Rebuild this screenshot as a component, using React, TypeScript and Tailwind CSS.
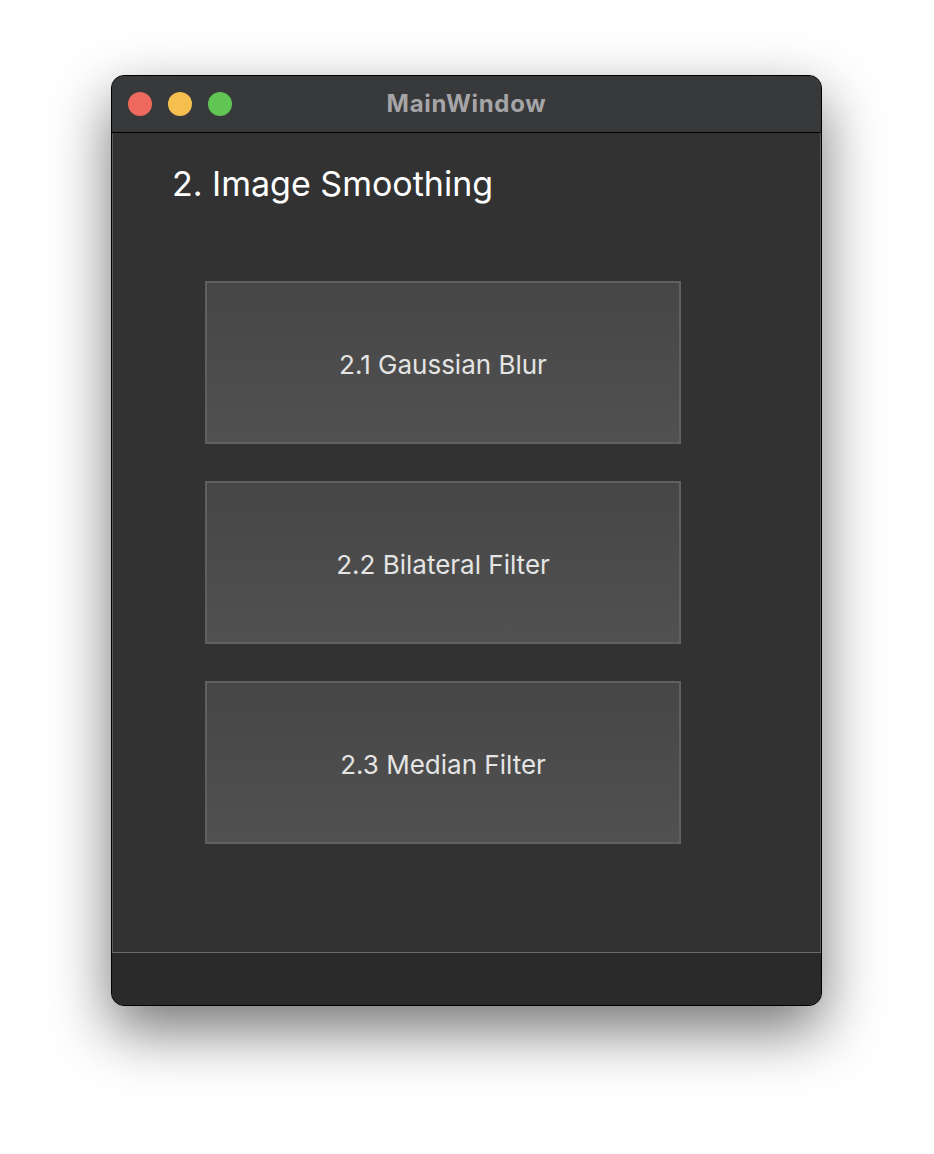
const items = ["2.1 Gaussian Blur", "2.2 Bilateral Filter", "2.3 Median Filter"];

const TrafficLights = () => (
    <div className="absolute left-[16px] top-[16px] flex gap-[16px]">
        <span className="h-[24px] w-[24px] rounded-full bg-[#ee6a5f]" />
        <span className="h-[24px] w-[24px] rounded-full bg-[#f5bf4f]" />
        <span className="h-[24px] w-[24px] rounded-full bg-[#61c554]" />
    </div>
);

export default function App() {
    return (
        <div
            className="h-[1154px] w-[934px] bg-white pl-[111px] pt-[75px]"
            style={{ fontFamily: "Inter, 'Noto Sans', sans-serif" }}
        >
            <div className="flex h-[931px] w-[711px] flex-col overflow-hidden rounded-[13px] border border-black bg-[#323232] shadow-[0_24px_60px_rgba(0,0,0,0.55)] ring-1 ring-[#5a5a5a] ring-inset">
                {/* Title bar */}
                <div className="relative flex h-[57px] shrink-0 items-center justify-center border-b border-black bg-[#38393b]">
                    <TrafficLights />
                    <span className="text-[24px] font-bold tracking-[0.7px] text-[#a5a5a7]">MainWindow</span>
                </div>

                {/* Content */}
                <div className="flex flex-1 flex-col">
                    <h1 className="ml-[60px] mt-[30px] text-[34px] leading-[42px] text-white">
                        2. Image Smoothing
                    </h1>
                    <div className="ml-[93px] mt-[76px] flex flex-col gap-[37px]">
                        {items.map((item) => (
                            <button
                                key={item}
                                className="flex h-[163px] w-[476px] items-center justify-center border-2 border-[#606060] bg-gradient-to-b from-[#464646] to-[#515151] pt-[3px] text-[26px] text-[#e4e4e4]"
                            >
                                {item}
                            </button>
                        ))}
                    </div>
                </div>

                {/* Status bar */}
                <div className="h-[53px] shrink-0 border-t border-[#6a6a6a] bg-[#2a2a2a]" />
            </div>
        </div>
    );
}
